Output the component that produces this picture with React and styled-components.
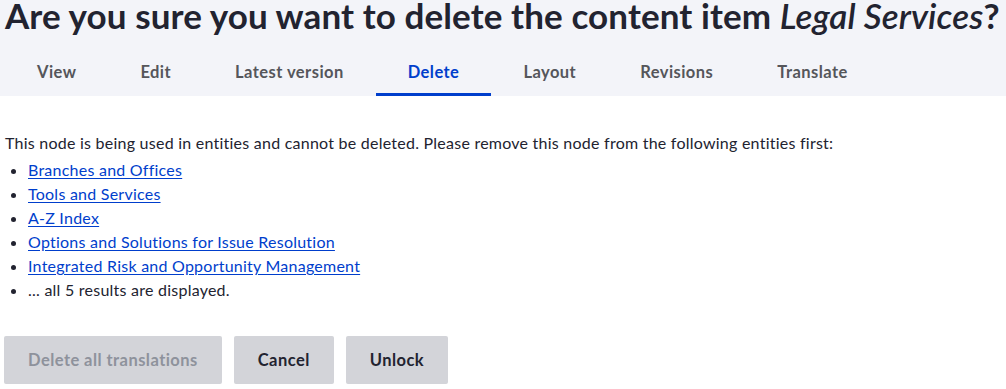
import React from "react";
import styled, { createGlobalStyle } from "styled-components";

const Global = createGlobalStyle`
  html, body { margin: 0; padding: 0; background: #ffffff; }
  body { font-family: Lato, "Noto Sans", sans-serif; color: #222330; }
  * { box-sizing: border-box; }
`;

const Header = styled.header`
  background: #f3f4f9;
  height: 96px;
  display: flex;
  flex-direction: column;
`;

const Title = styled.h1`
  margin: 0;
  padding: 0 0 0 5px;
  font-size: 35px;
  line-height: 31px;
  font-weight: 700;
  letter-spacing: 0.1px;
  color: #222330;
  white-space: nowrap;
  em { font-style: italic; font-weight: 600; }
`;

const Tabs = styled.nav`
  display: flex;
  margin-top: 18px;
  padding-left: 5px;
`;

const Tab = styled.a`
  display: block;
  height: 47px;
  padding: 0 32px;
  line-height: 46px;
  font-size: 16.5px;
  letter-spacing: 0.45px;
  font-weight: 700;
  color: ${(p) => (p.$active ? "#003ecc" : "#55565b")};
  text-decoration: none;
  border-bottom: 3px solid ${(p) => (p.$active ? "#003ecc" : "transparent")};
`;

const Main = styled.main`
  padding: 37px 5px 0 5px;
  font-size: 16px;
  line-height: 24px;
  letter-spacing: 0.24px;
`;

const Message = styled.p`
  margin: 0;
  line-height: 20px;
`;

const List = styled.ul`
  margin: 5px 0 0 0;
  padding-left: 23px;
`;

const Item = styled.li`
  line-height: 24px;
`;

const Link = styled.a`
  color: #003ecc;
  text-decoration: underline;
  text-underline-offset: 2px;
`;

const Actions = styled.div`
  display: flex;
  gap: 12px;
  margin-top: 34px;
  margin-left: -1px;
`;

const Button = styled.button`
  height: 48px;
  padding: 0 24px;
  border: none;
  border-radius: 2px;
  background: #d3d4d9;
  font-family: inherit;
  font-size: 16.5px;
  letter-spacing: 0.45px;
  font-weight: 700;
  color: ${(p) => (p.disabled ? "#8e929c" : "#222330")};
`;

const tabs = ["View", "Edit", "Latest version", "Delete", "Layout", "Revisions", "Translate"];
const links = [
  "Branches and Offices",
  "Tools and Services",
  "A-Z Index",
  "Options and Solutions for Issue Resolution",
  "Integrated Risk and Opportunity Management",
];

export default function App() {
  return (
    <>
      <Global />
      <Header>
        <Title>
          Are you sure you want to delete the content item <em>Legal Services</em>?
        </Title>
        <Tabs>
          {tabs.map((t) => (
            <Tab key={t} href="#" $active={t === "Delete"}>
              {t}
            </Tab>
          ))}
        </Tabs>
      </Header>
      <Main>
        <Message>
          This node is being used in entities and cannot be deleted. Please remove this node from the following entities first:
        </Message>
        <List>
          {links.map((l) => (
            <Item key={l}>
              <Link href="#">{l}</Link>
            </Item>
          ))}
          <Item>... all 5 results are displayed.</Item>
        </List>
        <Actions>
          <Button disabled>Delete all translations</Button>
          <Button>Cancel</Button>
          <Button>Unlock</Button>
        </Actions>
      </Main>
    </>
  );
}
